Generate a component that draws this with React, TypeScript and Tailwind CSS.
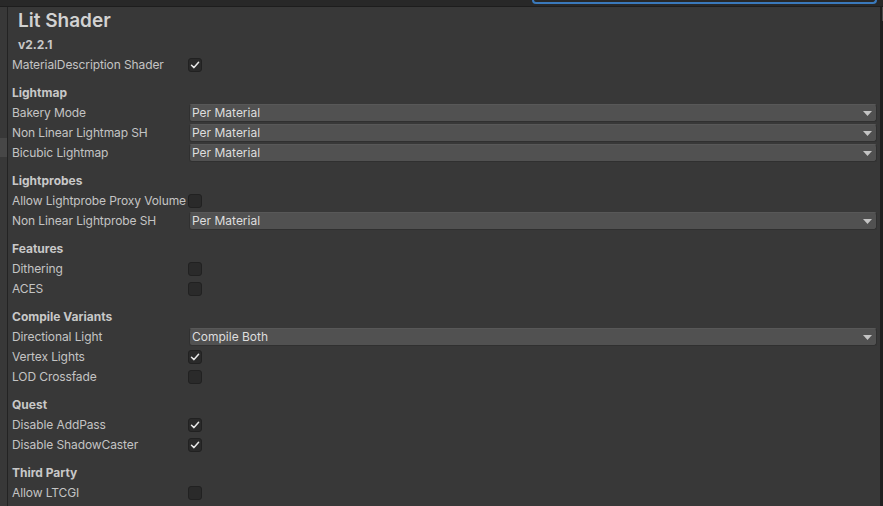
import React from 'react';

type Row =
  | { kind: 'check'; label: string; checked: boolean }
  | { kind: 'drop'; label: string; value: string };

const sections: { title: string; rows: Row[] }[] = [
  {
    title: 'Lightmap',
    rows: [
      { kind: 'drop', label: 'Bakery Mode', value: 'Per Material' },
      { kind: 'drop', label: 'Non Linear Lightmap SH', value: 'Per Material' },
      { kind: 'drop', label: 'Bicubic Lightmap', value: 'Per Material' },
    ],
  },
  {
    title: 'Lightprobes',
    rows: [
      { kind: 'check', label: 'Allow Lightprobe Proxy Volume', checked: false },
      { kind: 'drop', label: 'Non Linear Lightprobe SH', value: 'Per Material' },
    ],
  },
  {
    title: 'Features',
    rows: [
      { kind: 'check', label: 'Dithering', checked: false },
      { kind: 'check', label: 'ACES', checked: false },
    ],
  },
  {
    title: 'Compile Variants',
    rows: [
      { kind: 'drop', label: 'Directional Light', value: 'Compile Both' },
      { kind: 'check', label: 'Vertex Lights', checked: true },
      { kind: 'check', label: 'LOD Crossfade', checked: false },
    ],
  },
  {
    title: 'Quest',
    rows: [
      { kind: 'check', label: 'Disable AddPass', checked: true },
      { kind: 'check', label: 'Disable ShadowCaster', checked: true },
    ],
  },
  {
    title: 'Third Party',
    rows: [{ kind: 'check', label: 'Allow LTCGI', checked: false }],
  },
];

function Checkbox({ checked }: { checked: boolean }) {
  return (
    <div className="-ml-px w-[14px] h-[14px] rounded-[3px] bg-[#2a2a2a] border border-[#212121] flex items-center justify-center">
      {checked && (
        <svg width="10" height="10" viewBox="0 0 10 10">
          <path d="M1.5 5.2 L4 7.6 L8.6 2.2" fill="none" stroke="#e8e8e8" strokeWidth="1.5" strokeLinecap="round" strokeLinejoin="round" />
        </svg>
      )}
    </div>
  );
}

function Dropdown({ value }: { value: string }) {
  return (
    <div className="flex-1 h-[18px] mr-[3px] rounded-[3px] bg-[#515151] border border-[#303030] border-t-[#585858] flex items-center pl-[2px] pr-[4px] text-[#dedede]">
      <span className="flex-1">{value}</span>
      <svg width="9" height="5" viewBox="0 0 9 5">
        <path d="M0 0 H9 L4.5 5 Z" fill="#c4c4c4" />
      </svg>
    </div>
  );
}

function Field({ row }: { row: Row }) {
  return (
    <div className="h-[20px] flex items-center">
      <div className="w-[177px] shrink-0 whitespace-nowrap tracking-[-0.1px]">{row.label}</div>
      {row.kind === 'check' ? <Checkbox checked={row.checked} /> : <Dropdown value={row.value} />}
    </div>
  );
}

export default function App() {
  return (
    <div
      className="w-[883px] h-[506px] bg-[#383838] overflow-hidden flex flex-col text-[12px] text-[#c4c4c4]"
      style={{ fontFamily: 'Inter, "Noto Sans", sans-serif' }}
    >
      <div className="h-[7px] shrink-0 bg-[#282828] border-b border-[#1d1d1d] flex">
        <div className="w-[532px]" />
        <div className="w-[345px] h-[4px] rounded-b-[4px] border-2 border-t-0 border-[#3a79bb]" />
      </div>
      <div className="flex-1 flex">
        <div className="w-[8px] shrink-0 border-r border-[#232323] flex flex-col">
          <div className="h-[131px]" />
          <div className="h-[19px] bg-[#474747]" />
        </div>
        <div className="flex-1 pl-[4px]">
          <div className="h-[27px] pt-[2px] pl-[6px] flex items-center text-[19px] font-semibold text-[#d2d2d2]">
            Lit Shader
          </div>
          <div className="h-[21px] pl-[6px] flex items-center font-bold text-[#c8c8c8]">v2.2.1</div>
          <Field row={{ kind: 'check', label: 'MaterialDescription Shader', checked: true }} />
          {sections.map((s) => (
            <div key={s.title} className="mt-[8px]">
              <div className="h-[20px] flex items-center font-bold text-[#c8c8c8]">{s.title}</div>
              {s.rows.map((r) => (
                <Field key={r.label} row={r} />
              ))}
            </div>
          ))}
        </div>
        <div className="w-[3px] shrink-0 bg-[#1f1f1f] flex flex-col">
          <div className="h-[14px] bg-[#4a4a4a] ml-[2px]" />
        </div>
      </div>
    </div>
  );
}
